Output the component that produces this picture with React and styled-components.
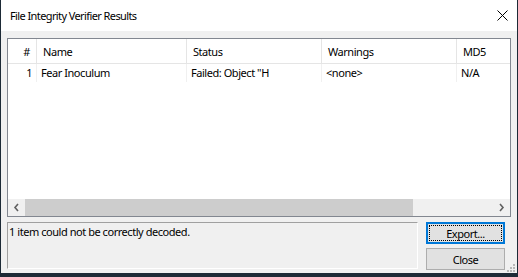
import styled, { createGlobalStyle } from "styled-components";

const GlobalStyle = createGlobalStyle`
  html, body {
    margin: 0;
    padding: 0;
    background: #1d2a36;
  }
  body {
    font-family: "Noto Sans", "Open Sans", sans-serif;
    font-size: 11px;
    letter-spacing: -0.45px;
    color: #000;
  }
`;

const columns = [
  { key: "num", title: "#", width: 29, align: "right" },
  { key: "name", title: "Name", width: 150 },
  { key: "status", title: "Status", width: 135 },
  { key: "warnings", title: "Warnings", width: 135 },
  { key: "md5", title: "MD5", width: 60 },
];

const rows = [
  {
    num: "1",
    name: "Fear Inoculum",
    status: 'Failed: Object "H',
    warnings: "<none>",
    md5: "N/A",
  },
];

export default function App() {
  return (
    <>
      <GlobalStyle />
      <Window>
        <TitleBar>
          <Title>File Integrity Verifier Results</Title>
          <CloseX>
            <svg width="11" height="11" viewBox="0 0 11 11">
              <path d="M0.5 0.5 L10.5 10.5 M10.5 0.5 L0.5 10.5" stroke="#000" strokeWidth="1" />
            </svg>
          </CloseX>
        </TitleBar>
        <Body>
          <ListView>
            <ListArea>
              <HeaderRow>
                {columns.map((c) => (
                  <HeaderCell key={c.key} $w={c.width} $align={c.align}>
                    {c.title}
                  </HeaderCell>
                ))}
              </HeaderRow>
              {rows.map((r, i) => (
                <Row key={i}>
                  {columns.map((c) => (
                    <Cell key={c.key} $w={c.width} $align={c.align}>
                      {r[c.key]}
                    </Cell>
                  ))}
                </Row>
              ))}
            </ListArea>
            <HScroll>
              <ArrowBtn>
                <svg width="7" height="9" viewBox="0 0 7 9">
                  <path d="M5 1 L2 4.5 L5 8" stroke="#606060" strokeWidth="1.6" fill="none" />
                </svg>
              </ArrowBtn>
              <Track>
                <Thumb />
              </Track>
              <ArrowBtn>
                <svg width="7" height="9" viewBox="0 0 7 9">
                  <path d="M2 1 L5 4.5 L2 8" stroke="#606060" strokeWidth="1.6" fill="none" />
                </svg>
              </ArrowBtn>
            </HScroll>
          </ListView>
          <Footer>
            <StatusBox>1 item could not be correctly decoded.</StatusBox>
            <Buttons>
              <Button $primary>
                <FocusRing>Export...</FocusRing>
              </Button>
              <Button>Close</Button>
            </Buttons>
          </Footer>
          <Grip>
            <svg width="9" height="9" viewBox="0 0 9 9">
              <rect x="6" y="0" width="2" height="2" fill="#b8b8b8" />
              <rect x="3" y="3" width="2" height="2" fill="#b8b8b8" />
              <rect x="6" y="3" width="2" height="2" fill="#b8b8b8" />
              <rect x="0" y="6" width="2" height="2" fill="#b8b8b8" />
              <rect x="3" y="6" width="2" height="2" fill="#b8b8b8" />
              <rect x="6" y="6" width="2" height="2" fill="#b8b8b8" />
            </svg>
          </Grip>
        </Body>
      </Window>
    </>
  );
}

const Window = styled.div`
  margin-left: 1px;
  width: 516px;
  height: 273px;
  background: #f0f0f0;
  display: flex;
  flex-direction: column;
  overflow: hidden;
`;

const TitleBar = styled.div`
  height: 31px;
  background: #fff;
  display: flex;
  align-items: center;
  justify-content: space-between;
  padding-left: 9px;
  box-sizing: border-box;
`;

const Title = styled.span`
  font-size: 11px;
  letter-spacing: -0.6px;
  color: #000;
  padding-bottom: 1px;
`;

const CloseX = styled.div`
  width: 30px;
  height: 31px;
  display: flex;
  align-items: center;
  justify-content: center;
`;

const Body = styled.div`
  position: relative;
  flex: 1;
  padding: 7px 6px 0 6px;
  display: flex;
  flex-direction: column;
`;

const ListView = styled.div`
  height: 179px;
  box-sizing: border-box;
  border: 1px solid #828790;
  background: #fff;
  display: flex;
  flex-direction: column;
  overflow: hidden;
`;

const ListArea = styled.div`
  flex: 1;
  overflow: hidden;
`;

const HeaderRow = styled.div`
  display: flex;
  height: 24px;
  border-bottom: 1px solid #e5e5e5;
  white-space: nowrap;
`;

const HeaderCell = styled.div`
  flex: 0 0 ${(p) => p.$w}px;
  box-sizing: border-box;
  border-right: 1px solid #e5e5e5;
  padding: 0 6px;
  display: flex;
  align-items: center;
  justify-content: ${(p) => (p.$align === "right" ? "flex-end" : "flex-start")};
  overflow: hidden;
`;

const Row = styled.div`
  display: flex;
  height: 18px;
  white-space: nowrap;
`;

const Cell = styled.div`
  flex: 0 0 ${(p) => p.$w}px;
  box-sizing: border-box;
  border-right: 1px solid #f0f0f0;
  padding: 0 4px 2px;
  display: flex;
  align-items: center;
  justify-content: ${(p) => (p.$align === "right" ? "flex-end" : "flex-start")};
  overflow: hidden;
`;

const HScroll = styled.div`
  height: 17px;
  display: flex;
  background: #f0f0f0;
`;

const ArrowBtn = styled.div`
  width: 17px;
  height: 17px;
  display: flex;
  align-items: center;
  justify-content: center;
`;

const Track = styled.div`
  flex: 1;
  display: flex;
  align-items: stretch;
`;

const Thumb = styled.div`
  width: 388px;
  background: #cdcdcd;
`;

const Footer = styled.div`
  display: flex;
  gap: 8px;
  margin-top: 5px;
`;

const StatusBox = styled.div`
  width: 411px;
  height: 47px;
  box-sizing: border-box;
  border-top: 1px solid #a0a0a0;
  border-left: 1px solid #a0a0a0;
  border-right: 1px solid #fff;
  border-bottom: 1px solid #fff;
  padding: 1px 1px;
  line-height: 16px;
`;

const Buttons = styled.div`
  display: flex;
  flex-direction: column;
  gap: 4px;
`;

const Button = styled.div`
  width: 79px;
  height: 22px;
  box-sizing: border-box;
  background: #e1e1e1;
  border: ${(p) => (p.$primary ? "2px solid #0078d7" : "1px solid #adadad")};
  display: flex;
  align-items: center;
  justify-content: center;
  padding: ${(p) => (p.$primary ? "1px" : "0")};
`;

const FocusRing = styled.div`
  flex: 1;
  align-self: stretch;
  border: 1px dotted #000;
  display: flex;
  align-items: center;
  justify-content: center;
`;

const Grip = styled.div`
  position: absolute;
  right: 1px;
  bottom: 0px;
  width: 9px;
  height: 9px;
  line-height: 0;
`;
